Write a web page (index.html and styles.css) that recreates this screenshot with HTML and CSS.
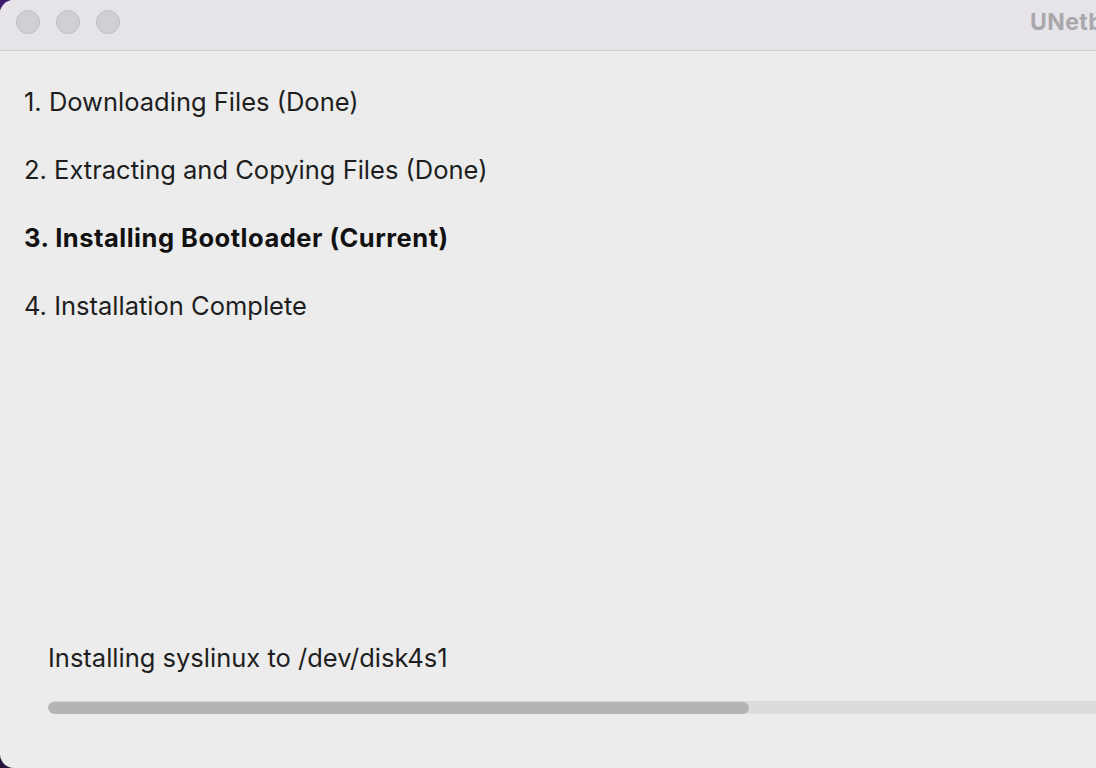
FILE: index.html
```html
<!doctype html>
<html lang="en">
<head>
	<meta charset="UTF-8">
	<title>UNetbootin</title>
	<link rel="stylesheet" href="styles.css">
</head>
<body>
<div class="window">
	<div class="titlebar">
		<div class="lights">
			<span class="light"></span>
			<span class="light"></span>
			<span class="light"></span>
		</div>
		<div class="title">UNetbootin</div>
	</div>
	<div class="content">
		<ul class="steps">
			<li class="step">1. Downloading Files (Done)</li>
			<li class="step">2. Extracting and Copying Files (Done)</li>
			<li class="step current">3. Installing Bootloader (Current)</li>
			<li class="step">4. Installation Complete</li>
		</ul>
		<div class="status">
			<p class="status-text">Installing syslinux to /dev/disk4s1</p>
			<div class="bar">
				<div class="bar-fill" style="width: 701px"></div>
			</div>
		</div>
	</div>
</div>
</body>
</html>
```

FILE: styles.css
```css
* {
	box-sizing: border-box;
}
html, body {
	margin: 0;
	height: 100%;
}
body {
	background: linear-gradient(160deg, #3b1a6f 0%, #1a1320 100%);
	font-family: Inter, "Liberation Sans", sans-serif;
	overflow: hidden;
}
.window {
	width: 1130px;
	height: 768px;
	background: #ececec;
	border-radius: 14px 0 0 14px;
	overflow: hidden;
	display: flex;
	flex-direction: column;
}
.titlebar {
	height: 51px;
	background: #e6e4e9;
	border-bottom: 1px solid #cfcdd1;
	display: flex;
	align-items: center;
	padding-left: 16px;
	flex-shrink: 0;
}
.lights {
	display: flex;
	gap: 16px;
	margin-top: -6px;
}
.light {
	width: 24px;
	height: 24px;
	border-radius: 50%;
	background: #d0cfd3;
	border: 1px solid #bfbec3;
}
.title {
	margin-left: auto;
	margin-right: -100px;
	margin-top: -6px;
	font-size: 23px;
	font-weight: 700;
	letter-spacing: 0.4px;
	color: #a8a7ab;
	white-space: nowrap;
	width: 200px;
}
.content {
	flex: 1;
	display: flex;
	flex-direction: column;
	padding: 0 0 0 24px;
}
.steps {
	list-style: none;
	margin: 0;
	padding: 36px 0 0;
	display: flex;
	flex-direction: column;
	gap: 38px;
}
.step {
	font-size: 25.5px;
	line-height: 30px;
	color: #1e1e1e;
}
.step.current {
	font-weight: 700;
	letter-spacing: 0.5px;
	color: #111;
}
.status {
	margin-top: auto;
	padding: 0 0 54px 24px;
}
.status-text {
	margin: 0 0 28px;
	font-size: 25.5px;
	line-height: 30px;
	color: #1e1e1e;
}
.bar {
	height: 13px;
	border-radius: 7px 0 0 7px;
	background: #dcdcdc;
	border-top: 1px solid #d6d6d6;
	overflow: hidden;
}
.bar-fill {
	height: 100%;
	background: #b4b4b4;
	border-radius: 7px;
}
```
